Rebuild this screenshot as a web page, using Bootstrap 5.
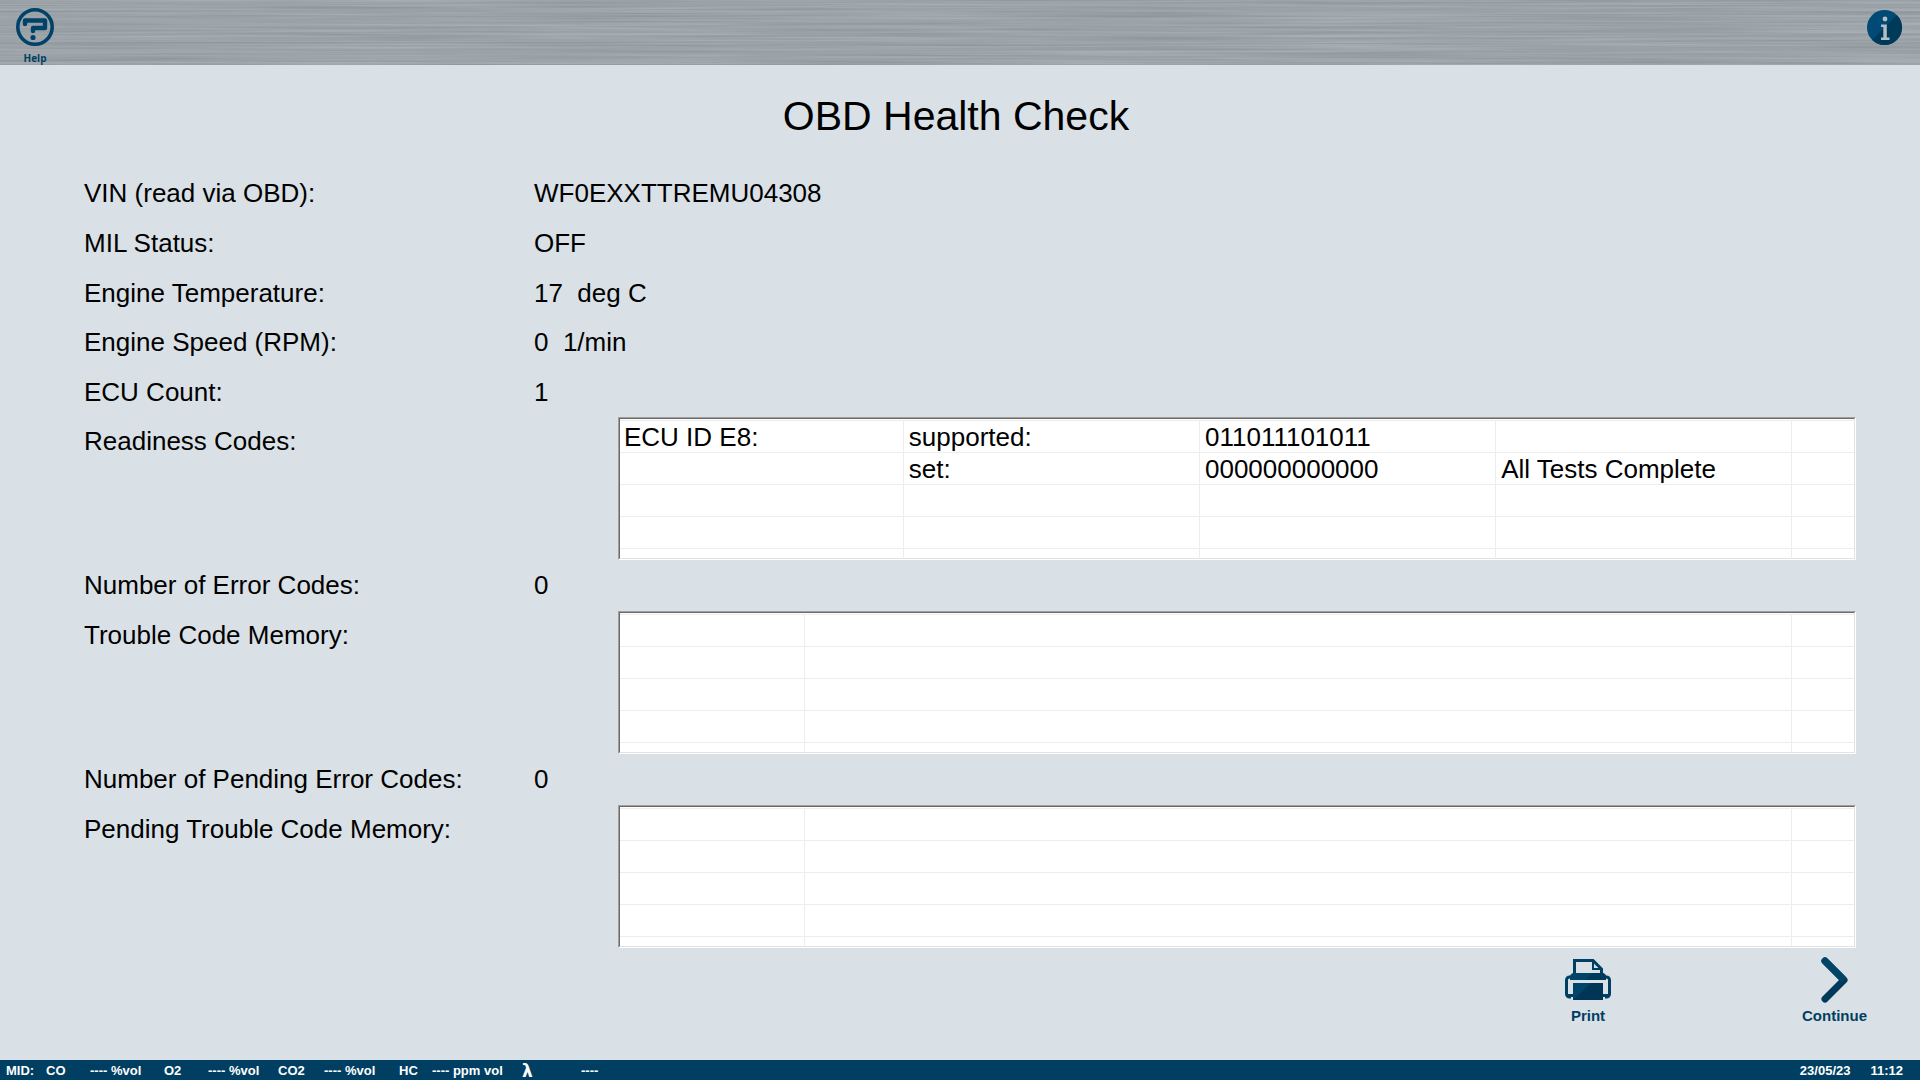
<!DOCTYPE html>
<html lang="en">
<head>
<meta charset="utf-8">
<meta name="viewport" content="width=device-width, initial-scale=1">
<title>OBD Health Check</title>
<link href="https://cdn.jsdelivr.net/npm/bootstrap@5.3.0/dist/css/bootstrap.min.css" rel="stylesheet">
<style>
  :root { --navy: #003f62; --panel: #d9e0e6; }
  body { background: var(--panel); color: #000; font-family: "Liberation Sans", Arial, sans-serif; font-size: 26px; line-height: 30px; }
  .top-strip { height: 65px; background: #9aa3a8; padding: 8px 16px; }
  .brushed { position: absolute; inset: 0; width: 100%; height: 100%; }
  .strip-btn, .action-btn { color: var(--navy); font-weight: 700; }
  .strip-btn { font: 700 10px/12px "Open Sans", sans-serif; gap: 6px; }
  .screen-title { font-size: 41px; line-height: 50px; font-weight: 400; padding-top: 26px; margin-bottom: 27px; }
  .readout { padding-left: 84px; padding-right: 64px; }
  .facts { display: grid; grid-auto-rows: 1fr; height: 249px; }
  .fact { display: grid; grid-template-columns: 450px 1fr; padding-top: 10px; white-space: pre; }
  .count { height: 51px; }
  .memory { display: grid; grid-template-columns: 534px 1fr; }
  .memory-name { padding-top: 9px; }
  .sunken { border: 1px solid; border-color: #a0a0a0 #fff #fff #a0a0a0; height: 143px; }
  .sunken-in { border: 1px solid; border-color: #696969 #e3e3e3 #e3e3e3 #696969; background: #fff; height: 100%; overflow: hidden; padding-top: 1px; }
  .grid-list { table-layout: fixed; width: 100%; border-collapse: separate; border-spacing: 0; border-top: 1px solid #ededed; }
  .grid-list td { height: 32px; line-height: 29px; padding: 2px 0 0 4px; border: 0 solid #ededed; border-width: 0 1px 1px 0; white-space: nowrap; }
  .grid-list td + td { padding-left: 5px; }
  .grid-list td:last-child { border-right: 0; }
  .w-a { width: 23%; } .w-b { width: 24%; } .w-c { width: 15%; } .w-d { width: 80%; }
  .actions { gap: 191px; padding: 8px 53px 32px 0; }
  .action-btn { font-size: 15px; line-height: 18px; gap: 3px; }
  .status-bar { height: 20px; background: var(--navy); color: #fff; font-size: 13px; line-height: 22px; font-weight: 700; padding: 0 17px 0 6px; white-space: nowrap; overflow: hidden; }
  .gases { display: grid; grid-template-columns: 40px 44px 74px 44px 70px 46px 75px 33px 90px 59px auto; }
  .lambda { font-family: "DejaVu Sans", sans-serif; font-size: 17px; }
  .clock { gap: 20px; }
</style>
<script src="https://cdn.jsdelivr.net/npm/bootstrap@5.3.0/dist/js/bootstrap.bundle.min.js"></script>
</head>
<body class="d-flex flex-column min-vh-100">
<header class="top-strip position-relative d-flex justify-content-between align-items-start">
  <svg class="brushed" aria-hidden="true">
    <filter id="brush" x="0" y="0" width="100%" height="100%" color-interpolation-filters="sRGB">
      <feTurbulence type="fractalNoise" baseFrequency="0.004 0.45" numOctaves="3" seed="8"/>
      <feColorMatrix values="0.14 0 0 0 0.54  0.14 0 0 0 0.57  0.14 0 0 0 0.59  0 0 0 0 1"/>
    </filter>
    <rect width="100%" height="100%" filter="url(#brush)"/>
  </svg>
  <button type="button" class="strip-btn btn p-0 border-0 position-relative d-flex flex-column align-items-center">
    <svg width="38" height="38" viewBox="0 0 38 38" fill="none" aria-hidden="true">
      <circle cx="19" cy="19" r="17.200" stroke="#004268" stroke-width="3.600"/>
      <path d="M9 16V12.500H29V20H17V23" stroke="#004268" stroke-width="4.400" stroke-linejoin="round" stroke-linecap="round"/>
      <circle cx="17" cy="29.500" r="2.600" fill="#004268"/>
    </svg>
    <span>Help</span>
  </button>
  <button type="button" class="btn p-0 border-0 position-relative d-flex" aria-label="Information">
    <svg width="39" height="39" viewBox="0 0 39 39" aria-hidden="true">
      <circle cx="19.500" cy="19.500" r="17.500" fill="#004a75"/>
      <path d="M31.900 7.100A17.500 17.500 0 0 1 7.100 31.900z" fill="#003a5b"/>
      <circle cx="20" cy="11" r="2.400" fill="#b5bec4"/>
      <path d="M16 16.500h5.800v13h2.700v2.500h-8.500v-2.500h2.300v-10.500H16z" fill="#b5bec4"/>
    </svg>
  </button>
</header>

<main class="flex-grow-1">
  <h1 class="screen-title text-center pe-2">OBD Health Check</h1>
  <div class="readout">
    <div class="facts">
      <div class="fact"><span>VIN (read via OBD):</span><span>WF0EXXTTREMU04308</span></div>
      <div class="fact"><span>MIL Status:</span><span>OFF</span></div>
      <div class="fact"><span>Engine Temperature:</span><span>17  deg C</span></div>
      <div class="fact"><span>Engine Speed (RPM):</span><span>0  1/min</span></div>
      <div class="fact"><span>ECU Count:</span><span>1</span></div>
    </div>

    <section class="memory">
      <div class="memory-name" id="readiness">Readiness Codes:</div>
      <div class="sunken"><div class="sunken-in">
        <table class="grid-list" aria-labelledby="readiness">
          <colgroup><col class="w-a"><col class="w-b"><col class="w-b"><col class="w-b"><col></colgroup>
          <tbody>
            <tr><td>ECU ID E8:</td><td>supported:</td><td>011011101011</td><td></td><td></td></tr>
            <tr><td></td><td>set:</td><td>000000000000</td><td>All Tests Complete</td><td></td></tr>
            <tr><td></td><td></td><td></td><td></td><td></td></tr>
            <tr><td></td><td></td><td></td><td></td><td></td></tr>
            <tr><td></td><td></td><td></td><td></td><td></td></tr>
          </tbody>
        </table>
      </div></div>
    </section>

    <div class="fact count"><span>Number of Error Codes:</span><span>0</span></div>
    <section class="memory">
      <div class="memory-name" id="trouble">Trouble Code Memory:</div>
      <div class="sunken"><div class="sunken-in">
        <table class="grid-list" aria-labelledby="trouble">
          <colgroup><col class="w-c"><col class="w-d"><col></colgroup>
          <tbody>
            <tr><td></td><td></td><td></td></tr>
            <tr><td></td><td></td><td></td></tr>
            <tr><td></td><td></td><td></td></tr>
            <tr><td></td><td></td><td></td></tr>
            <tr><td></td><td></td><td></td></tr>
          </tbody>
        </table>
      </div></div>
    </section>

    <div class="fact count"><span>Number of Pending Error Codes:</span><span>0</span></div>
    <section class="memory">
      <div class="memory-name" id="pending">Pending Trouble Code Memory:</div>
      <div class="sunken"><div class="sunken-in">
        <table class="grid-list" aria-labelledby="pending">
          <colgroup><col class="w-c"><col class="w-d"><col></colgroup>
          <tbody>
            <tr><td></td><td></td><td></td></tr>
            <tr><td></td><td></td><td></td></tr>
            <tr><td></td><td></td><td></td></tr>
            <tr><td></td><td></td><td></td></tr>
            <tr><td></td><td></td><td></td></tr>
          </tbody>
        </table>
      </div></div>
    </section>
  </div>

  <div class="actions d-flex justify-content-end">
    <button type="button" class="action-btn btn p-0 border-0 d-flex flex-column align-items-center">
      <svg width="46" height="48" viewBox="0 0 46 48" aria-hidden="true">
        <path d="M9.500 20V4.500H28L36.500 13V20" fill="none" stroke="#003f62" stroke-width="3"/>
        <path d="M28 5V13H36" fill="none" stroke="#003f62" stroke-width="2"/>
        <rect x="1.500" y="21" width="43" height="20" rx="3" fill="none" stroke="#003f62" stroke-width="3"/>
        <path d="M8 17H38Q41 18 41 21V24H5V21Q5 18 8 17z" fill="#004468"/>
        <path d="M20 24L27 17H38Q41 18 41 21V24z" fill="#003a5b"/>
        <rect x="6" y="24" width="34" height="20" fill="#d9e0e6"/>
        <rect x="8" y="27" width="30" height="17" fill="#00446c"/>
        <path d="M8 44L26 27H38V44z" fill="#003555"/>
        <path d="M3 39.500H8M38 39.500H43" stroke="#003f62" stroke-width="3"/>
      </svg>
      <span>Print</span>
    </button>
    <button type="button" class="action-btn btn p-0 border-0 d-flex flex-column align-items-center">
      <svg width="30" height="48" viewBox="0 0 30 48" fill="none" stroke-width="7" stroke-linecap="round" stroke-linejoin="round" aria-hidden="true">
        <path d="M5 5L24 24L5 43" stroke="#003a5b"/>
        <path d="M5 5L22 22" stroke="#004468"/>
      </svg>
      <span>Continue</span>
    </button>
  </div>
</main>

<footer class="status-bar d-flex justify-content-between">
  <div class="gases">
    <span>MID:</span>
    <span>CO</span><span>---- %vol</span>
    <span>O2</span><span>---- %vol</span>
    <span>CO2</span><span>---- %vol</span>
    <span>HC</span><span>---- ppm vol</span>
    <span class="lambda">λ</span><span>----</span>
  </div>
  <div class="clock d-flex"><span>23/05/23</span><span>11:12</span></div>
</footer>
</body>
</html>
